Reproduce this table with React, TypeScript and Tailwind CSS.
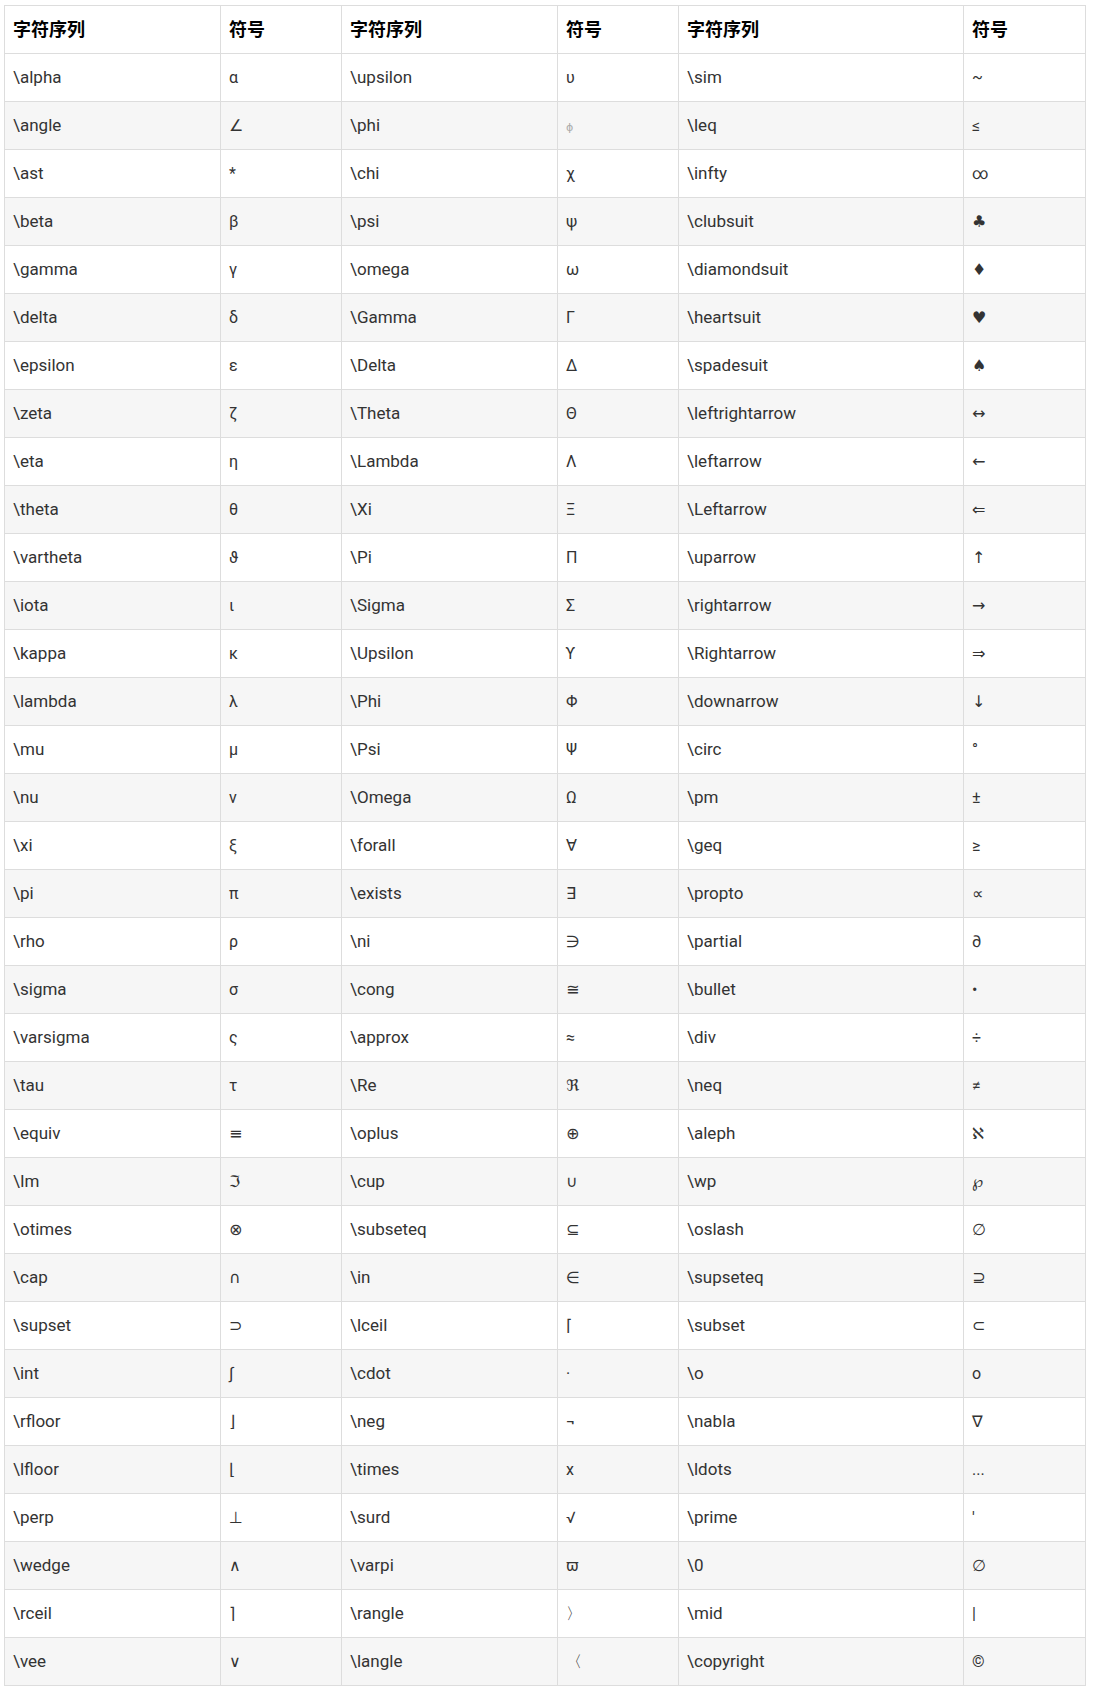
const ROWS: [string, string, string, string, string, string][] = [
  ["\\alpha", "α", "\\upsilon", "υ", "\\sim", "~"],
  ["\\angle", "∠", "\\phi", "ϕ", "\\leq", "≤"],
  ["\\ast", "*", "\\chi", "χ", "\\infty", "∞"],
  ["\\beta", "β", "\\psi", "ψ", "\\clubsuit", "♣"],
  ["\\gamma", "γ", "\\omega", "ω", "\\diamondsuit", "♦"],
  ["\\delta", "δ", "\\Gamma", "Γ", "\\heartsuit", "♥"],
  ["\\epsilon", "ε", "\\Delta", "Δ", "\\spadesuit", "♠"],
  ["\\zeta", "ζ", "\\Theta", "Θ", "\\leftrightarrow", "↔"],
  ["\\eta", "η", "\\Lambda", "Λ", "\\leftarrow", "←"],
  ["\\theta", "θ", "\\Xi", "Ξ", "\\Leftarrow", "⇐"],
  ["\\vartheta", "ϑ", "\\Pi", "Π", "\\uparrow", "↑"],
  ["\\iota", "ι", "\\Sigma", "Σ", "\\rightarrow", "→"],
  ["\\kappa", "κ", "\\Upsilon", "ϒ", "\\Rightarrow", "⇒"],
  ["\\lambda", "λ", "\\Phi", "Φ", "\\downarrow", "↓"],
  ["\\mu", "μ", "\\Psi", "Ψ", "\\circ", "°"],
  ["\\nu", "ν", "\\Omega", "Ω", "\\pm", "±"],
  ["\\xi", "ξ", "\\forall", "∀", "\\geq", "≥"],
  ["\\pi", "π", "\\exists", "∃", "\\propto", "∝"],
  ["\\rho", "ρ", "\\ni", "∋", "\\partial", "∂"],
  ["\\sigma", "σ", "\\cong", "≅", "\\bullet", "•"],
  ["\\varsigma", "ς", "\\approx", "≈", "\\div", "÷"],
  ["\\tau", "τ", "\\Re", "ℜ", "\\neq", "≠"],
  ["\\equiv", "≡", "\\oplus", "⊕", "\\aleph", "ℵ"],
  ["\\Im", "ℑ", "\\cup", "∪", "\\wp", "℘"],
  ["\\otimes", "⊗", "\\subseteq", "⊆", "\\oslash", "∅"],
  ["\\cap", "∩", "\\in", "∈", "\\supseteq", "⊇"],
  ["\\supset", "⊃", "\\lceil", "⌈", "\\subset", "⊂"],
  ["\\int", "∫", "\\cdot", "·", "\\o", "o"],
  ["\\rfloor", "⌋", "\\neg", "¬", "\\nabla", "∇"],
  ["\\lfloor", "⌊", "\\times", "x", "\\ldots", "..."],
  ["\\perp", "⊥", "\\surd", "√", "\\prime", "′"],
  ["\\wedge", "∧", "\\varpi", "ϖ", "\\0", "∅"],
  ["\\rceil", "⌉", "\\rangle", "〉", "\\mid", "|"],
  ["\\vee", "∨", "\\langle", "〈", "\\copyright", "©"],
];

// column widths measured border to border
const WIDTHS = ["w-[216px]", "w-[121px]", "w-[216px]", "w-[121px]", "w-[285px]", "w-[122px]"];
const HEADERS = ["字符序列", "符号", "字符序列", "符号", "字符序列", "符号"];

export default function App() {
  return (
    <div className="min-h-screen bg-white pl-1 pt-[5px] font-['Roboto','Noto_Sans_CJK_SC',sans-serif]">
      <table className="w-[1082px] table-fixed border-collapse">
        <colgroup>
          {WIDTHS.map((w, i) => (
            <col key={i} className={w} />
          ))}
        </colgroup>
        <thead>
          <tr className="bg-white">
            {HEADERS.map((h, i) => (
              <th
                key={i}
                className="h-12 border border-[#dddddd] px-2 text-left text-[18px] font-bold text-black"
              >
                {h}
              </th>
            ))}
          </tr>
        </thead>
        <tbody>
          {ROWS.map((row, r) => (
            <tr key={r} className={r % 2 === 1 ? "bg-[#f6f6f6]" : "bg-white"}>
              {row.map((cell, c) => (
                <td
                  key={c}
                  className={
                    c % 2 === 1
                      ? "h-12 border border-[#dddddd] px-2 text-[16px] text-[#333333] font-['Roboto','DejaVu_Sans',sans-serif]"
                      : "h-12 border border-[#dddddd] px-2 text-[17px] text-[#333333]"
                  }
                >
                  {c === 3 && r === 1 ? (
                    <span className="text-[11px] text-[#aaaaaa]">{cell}</span>
                  ) : (
                    cell
                  )}
                </td>
              ))}
            </tr>
          ))}
        </tbody>
      </table>
    </div>
  );
}
